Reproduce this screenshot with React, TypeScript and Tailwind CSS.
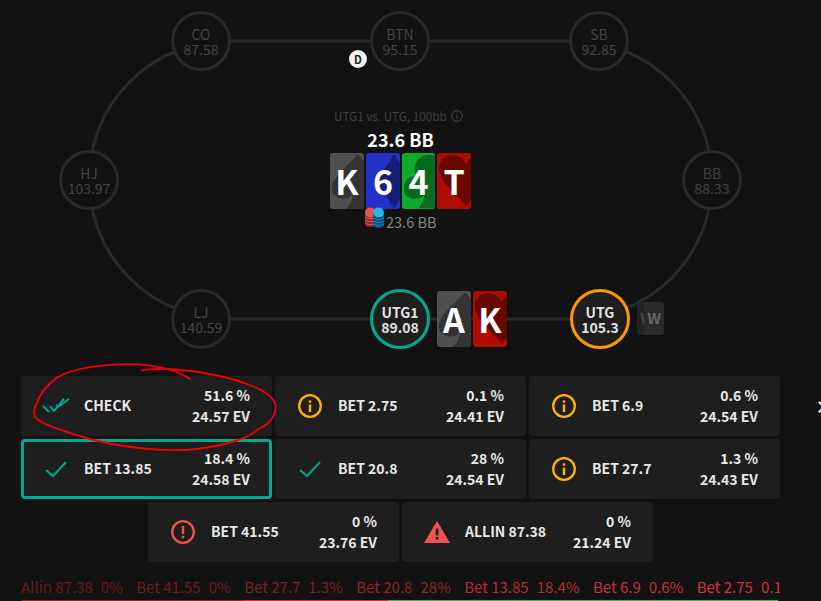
import type { ReactNode } from "react";

const FONT = "font-['Noto_Sans_CJK_SC','Noto_Sans',sans-serif]";

type Suit = "s" | "d" | "c" | "h";

const suitStyles: Record<Suit, { bg: string; dark: string }> = {
  s: { bg: "bg-[#505050]", dark: "#333333" },
  d: { bg: "bg-[#2232c8]", dark: "#151f78" },
  c: { bg: "bg-[#0eaa2e]", dark: "#076a1c" },
  h: { bg: "bg-[#ae0c00]", dark: "#680600" },
};

function SuitShape({ suit }: { suit: Suit }) {
  const fill = suitStyles[suit].dark;
  return (
    <svg viewBox="0 0 34 56" className="absolute inset-0 h-full w-full" aria-hidden>
      {suit === "s" && (
        <path
          fill={fill}
          d="M28 1 C36 12 54 22 54 36 C54 45 42 49 33 42 C34 48 36 52 40 56 L16 56 C20 52 22 48 23 42 C14 49 2 45 2 36 C2 22 20 12 28 1 Z"
        />
      )}
      {suit === "d" && <path fill={fill} d="M28 1 L45 28 L28 56 L11 28 Z" />}
      {suit === "c" && (
        <path
          fill={fill}
          d="M28 1 C37 1 43 8 43 15 C43 19 42 21 40 24 C48 21 58 26 58 37 C58 46 42 50 33 43 C34 49 36 53 39 56 L17 56 C20 53 22 49 23 43 C14 50 2 46 2 37 C2 26 8 21 16 24 C14 21 13 19 13 15 C13 8 19 1 28 1 Z"
        />
      )}
      {suit === "h" && (
        <path
          fill={fill}
          d="M29 53 C22 42 2 30 2 15 C2 6 9 2 15 2 C21 2 26 5 29 11 C32 5 37 2 43 2 C49 2 56 6 56 15 C56 30 36 42 29 53 Z"
        />
      )}
    </svg>
  );
}

function Card({ rank, suit, narrow }: { rank: string; suit: Suit; narrow?: boolean }) {
  return (
    <div
      className={`relative flex h-[56px] items-center justify-center overflow-hidden rounded-[3px] ${narrow ? "w-[33px]" : "w-[34px]"} ${suitStyles[suit].bg}`}
    >
      <SuitShape suit={suit} />
      <span className="relative text-[34px] leading-none font-bold text-white">{rank}</span>
    </div>
  );
}

function Seat({ name, stack, x, y, ring }: { name: string; stack: string; x: number; y: number; ring?: string }) {
  const tone = ring
    ? `${ring} bg-[#1e1e1e] text-[#e2e2e2] font-semibold`
    : "border-[#292929] bg-[#121212] text-[#434343]";
  return (
    <div
      className={`absolute flex h-[60px] w-[60px] flex-col items-center justify-center rounded-full border-[3px] pt-[1px] text-[14px] leading-[15px] ${tone}`}
      style={{ left: x - 30, top: y - 30 }}
    >
      <span>{name}</span>
      <span>{stack}</span>
    </div>
  );
}

function Chips() {
  return (
    <svg width="22" height="22" viewBox="0 0 22 22" aria-hidden>
      <g>
        <path fill="#8f2c2c" d="M1 5 H12 V17 C12 21 1 21 1 17 Z" />
        <path fill="none" stroke="#ef5350" strokeWidth="1" d="M1 10 C3 12 10 12 12 10 M1 13 C3 15 10 15 12 13 M1 16 C3 18 10 18 12 16" />
        <ellipse cx="6.5" cy="5.5" rx="5.5" ry="5" fill="#ef5350" />
      </g>
      <g>
        <path fill="#0f4c70" d="M9 6 H20 V18 C20 22 9 22 9 18 Z" />
        <path fill="none" stroke="#1c86bd" strokeWidth="1" d="M9 11 C11 13 18 13 20 11 M9 14 C11 16 18 16 20 14 M9 17 C11 19 18 19 20 17" />
        <ellipse cx="14.5" cy="5.5" rx="5.5" ry="5" fill="#21b5ec" />
      </g>
    </svg>
  );
}

function Check() {
  return (
    <svg width="22" height="18" viewBox="0 0 22 18" fill="none" stroke="#00a98f" strokeWidth="2" aria-hidden>
      <path d="M1 10 L8 16 L21 2" />
    </svg>
  );
}

function DoubleCheck() {
  return (
    <svg width="28" height="16" viewBox="0 0 28 16" fill="none" stroke="#00a98f" strokeWidth="2" aria-hidden>
      <path d="M1 8 L7 14" />
      <path d="M8 8 L12 13 L22 1" />
      <path d="M14 7 L16 9 L27 1" />
    </svg>
  );
}

function InfoRing({ color }: { color: string }) {
  return (
    <svg width="24" height="24" viewBox="0 0 24 24" fill="none" aria-hidden>
      <circle cx="12" cy="12" r="10.8" stroke={color} strokeWidth="2.3" />
      <rect x="10.8" y="10.5" width="2.4" height="7.5" fill={color} />
      <rect x="10.8" y="6.3" width="2.4" height="2.4" fill={color} />
    </svg>
  );
}

function AlertRing() {
  return (
    <svg width="24" height="24" viewBox="0 0 24 24" fill="none" aria-hidden>
      <circle cx="12" cy="12" r="10.8" stroke="#ef5350" strokeWidth="2.3" />
      <rect x="10.8" y="6" width="2.4" height="8" fill="#ef5350" />
      <rect x="10.8" y="15.8" width="2.4" height="2.4" fill="#ef5350" />
    </svg>
  );
}

function Warning() {
  return (
    <svg width="26" height="22" viewBox="0 0 26 22" aria-hidden>
      <path fill="#ef5350" d="M13 0 L26 22 H0 Z" />
      <rect x="11.8" y="7.5" width="2.6" height="7" fill="#1e1e1e" />
      <rect x="11.8" y="16" width="2.6" height="2.6" fill="#1e1e1e" />
    </svg>
  );
}

type Action = { label: string; pct: string; ev: string; icon: ReactNode; selected?: boolean };

const actions: Action[] = [
  { label: "CHECK", pct: "51.6 %", ev: "24.57 EV", icon: <DoubleCheck /> },
  { label: "BET 2.75", pct: "0.1 %", ev: "24.41 EV", icon: <InfoRing color="#ffb300" /> },
  { label: "BET 6.9", pct: "0.6 %", ev: "24.54 EV", icon: <InfoRing color="#ffb300" /> },
  { label: "BET 13.85", pct: "18.4 %", ev: "24.58 EV", icon: <Check />, selected: true },
  { label: "BET 20.8", pct: "28 %", ev: "24.54 EV", icon: <Check /> },
  { label: "BET 27.7", pct: "1.3 %", ev: "24.43 EV", icon: <InfoRing color="#ffb300" /> },
  { label: "BET 41.55", pct: "0 %", ev: "23.76 EV", icon: <AlertRing /> },
  { label: "ALLIN 87.38", pct: "0 %", ev: "21.24 EV", icon: <Warning /> },
];

const history = [
  { label: "Allin 87.38", pct: "0%", color: "text-[#6a1b1b]" },
  { label: "Bet 41.55", pct: "0%", color: "text-[#6f1d1d]" },
  { label: "Bet 27.7", pct: "1.3%", color: "text-[#7d2020]" },
  { label: "Bet 20.8", pct: "28%", color: "text-[#8e2424]" },
  { label: "Bet 13.85", pct: "18.4%", color: "text-[#bb2d2d]" },
  { label: "Bet 6.9", pct: "0.6%", color: "text-[#cc3030]" },
  { label: "Bet 2.75", pct: "0.1%", color: "text-[#d63333]" },
];

function ActionCard({ action }: { action: Action }) {
  const border = action.selected ? "border-[3px] border-[#00a98f]" : "border-[3px] border-transparent";
  return (
    <div className={`flex h-[60px] w-[251px] items-center rounded-[4px] bg-[#1e1e1e] pr-[19px] ${border}`}>
      <div className="flex w-[60px] shrink-0 justify-center pl-[3px]">{action.icon}</div>
      <div className="-mt-[2px] text-[14px] font-semibold text-[#e8e8e8]">{action.label}</div>
      <div className="-mt-[1px] ml-auto text-right text-[14px] leading-[21px] font-semibold text-[#e8e8e8]">
        <div>{action.pct}</div>
        <div>{action.ev}</div>
      </div>
    </div>
  );
}

export default function App() {
  return (
    <div className={`relative h-[601px] w-[821px] overflow-hidden bg-[#121212] ${FONT}`}>
      <div className="relative h-[376px]">
        <svg className="absolute inset-0" width="821" height="376" aria-hidden>
          <rect x="89" y="41" width="623" height="278" rx="139" fill="none" stroke="#292929" strokeWidth="3" />
        </svg>

        <Seat name="CO" stack="87.58" x={201} y={41} />
        <Seat name="BTN" stack="95.15" x={400} y={41} />
        <Seat name="SB" stack="92.85" x={599} y={41} />
        <Seat name="HJ" stack="103.97" x={89} y={180} />
        <Seat name="BB" stack="88.33" x={712} y={180} />
        <Seat name="LJ" stack="140.59" x={201} y={319} />
        <Seat name="UTG1" stack="89.08" x={400} y={319} ring="border-[#00a98f]" />
        <Seat name="UTG" stack="105.3" x={600} y={319} ring="border-[#ff9800]" />

        <div className="absolute top-[50px] left-[349px] flex h-[18px] w-[18px] items-center justify-center rounded-full bg-[#f2f2f2] text-[11px] font-semibold text-[#222]">
          D
        </div>

        {/* pot and board */}
        <div className="absolute top-[107px] left-[330px] flex w-[141px] flex-col items-center">
          <div className="ml-[4px] flex items-center gap-[4px] self-start whitespace-nowrap text-[11.7px] leading-[18px] text-[#3f3f3f]">
            <span>UTG1 vs. UTG, 100bb</span>
            <svg width="12" height="12" viewBox="0 0 12 12" fill="none" stroke="#4a4a4a" aria-hidden>
              <circle cx="6" cy="6" r="5.3" />
              <path d="M6 5 V9 M6 3 V4" />
            </svg>
          </div>
          <div className="mt-[1px] mb-[1px] text-[18px] leading-[26px] font-semibold text-white">23.6 BB</div>
          <div className="flex gap-[2px]">
            <Card rank="K" suit="s" />
            <Card rank="6" suit="d" />
            <Card rank="4" suit="c" narrow />
            <Card rank="T" suit="h" />
          </div>
          <div className="relative -mt-[2px] flex items-start self-start pl-[34px] text-[14.5px] leading-[22px] text-[#858585]">
            <Chips />
            <span className="mt-[4px]">23.6 BB</span>
          </div>
        </div>

        {/* hero cards */}
        <div className="absolute top-[291px] left-[437px] flex gap-[2px]">
          <Card rank="A" suit="s" />
          <Card rank="K" suit="h" />
        </div>

        {/* villain folded cards */}
        <div className="absolute top-[302px] left-[637px] flex h-[33px] w-[20px] items-center justify-center overflow-hidden rounded-[3px] bg-[#242424] text-[15px] font-bold text-[#4a4a4a]">
          W
        </div>
        <div className="absolute top-[302px] left-[644px] flex h-[33px] w-[20px] items-center justify-center rounded-[3px] bg-[#2b2b2b] text-[15px] font-bold text-[#666]">
          W
        </div>
      </div>

      <div className="ml-[21px] flex w-[759px] flex-wrap justify-center gap-[3px]">
        {actions.map((action) => (
          <ActionCard key={action.label} action={action} />
        ))}
      </div>

      <div className="absolute top-[397px] left-[815px] text-[18px] leading-[18px] font-bold text-white">×</div>

      <div className="mt-[15px] ml-[21px] flex w-[759px] gap-[13.3px] overflow-hidden text-[15px] leading-[20px] whitespace-nowrap">
        {history.map((item) => (
          <span key={item.label} className={`flex shrink-0 gap-[8px] ${item.color}`}>
            <span>{item.label}</span>
            <span>{item.pct}</span>
          </span>
        ))}
      </div>

      <div className="absolute bottom-0 left-[22px] flex h-[1px] w-[756px]">
        <div className="w-[221px] bg-[#9c2626]" />
        <div className="w-[145px] bg-[#d32f2f]" />
        <div className="flex-1 bg-[#4caf50]" />
      </div>

      {/* hand-drawn annotation on top of the screenshot */}
      <svg
        className="pointer-events-none absolute top-[355px] left-[10px]"
        width="270"
        height="150"
        viewBox="0 0 810 450"
        fill="none"
        stroke="#f00000"
        strokeWidth="5.5"
        strokeLinecap="round"
        aria-hidden
      >
        <path d="M395 46 C425 42 450 40 475 42 C540 46 640 60 720 90 C765 108 795 130 797 155 C797 185 775 210 745 222 C720 250 640 272 560 282 C470 292 350 280 240 252 C170 232 110 212 85 195 C68 182 68 168 78 150 C90 115 110 90 140 68 C190 38 290 25 380 28 C430 30 490 40 540 72" />
      </svg>
    </div>
  );
}
